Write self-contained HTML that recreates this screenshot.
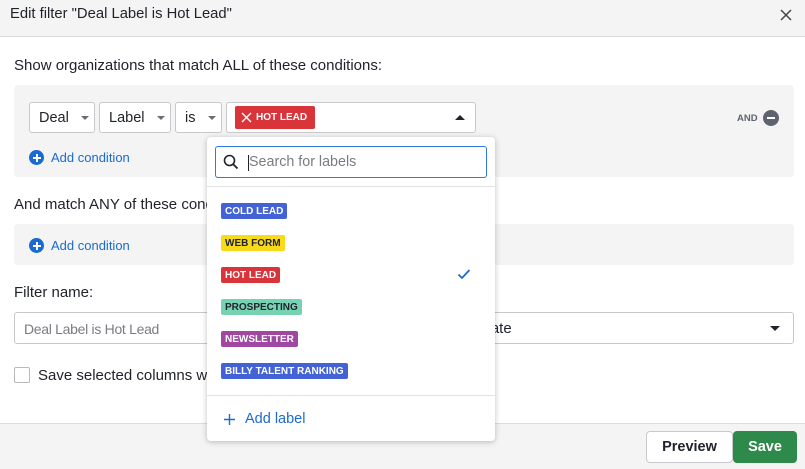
<!DOCTYPE html>
<html><head><style>
*{box-sizing:border-box;margin:0;padding:0}
body{width:805px;height:469px;overflow:hidden;background:#fff;font-family:"Liberation Sans",sans-serif;color:#21232c;position:relative;font-size:14px}
.a{position:absolute}
.hdr{left:0;top:0;width:805px;height:37px;background:#f4f4f4;border-bottom:1px solid #dcdcdc}
.box{background:#f4f4f4;border-radius:4px}
.sel{background:#fff;border:1px solid #c8c9cc;border-radius:3px;height:31px;top:102px;font-size:14.5px;line-height:31px;padding-left:9px}
.car{position:absolute;width:0;height:0;border-left:4px solid transparent;border-right:4px solid transparent;border-top:4px solid #6a6d74;top:13px}
.add{color:#1a6bd0;font-size:13px}
.plus{width:15px;height:15px;border-radius:50%;background:#1a6bd0;color:#fff}
.plus:before{content:"";position:absolute;left:3.5px;top:6.5px;width:8px;height:2px;background:#fff}
.plus:after{content:"";position:absolute;left:6.5px;top:3.5px;width:2px;height:8px;background:#fff}
.tag{left:221px;height:16px;font-size:10px;font-weight:bold;line-height:17px;padding:0 4px;border-radius:2px;color:#fff}
.btn{top:431px;height:32px;border-radius:4px;font-weight:bold;font-size:14.5px;line-height:31px;text-align:center}
.t{font-size:15px}
</style></head><body>
<div class="a hdr"></div>
<div class="a" style="left:10px;top:6px;font-size:14.8px">Edit filter "Deal Label is Hot Lead"</div>
<svg class="a" style="left:779px;top:8px" width="14" height="14"><path d="M2 2L12 12M12 2L2 12" stroke="#444" stroke-width="1.5"/></svg>

<div class="a t" style="left:14px;top:57px">Show organizations that match ALL of these conditions:</div>
<div class="a box" style="left:14px;top:85px;width:780px;height:92px"></div>
<div class="a sel" style="left:29px;width:66px">Deal<span class="car" style="left:51px"></span></div>
<div class="a sel" style="left:99px;width:72px">Label<span class="car" style="left:57px"></span></div>
<div class="a sel" style="left:175px;width:47px">is<span class="car" style="left:32px"></span></div>
<div class="a sel" style="left:226px;width:250px"><span class="car" style="left:228px;border-top:none;border-bottom:5px solid #21232c;top:12px;border-left-width:5px;border-right-width:5px"></span></div>
<div class="a" style="left:235px;top:106px;width:80px;height:23px;background:#d8343a;border-radius:2px;color:#fff;font-size:10px;font-weight:bold;line-height:24px;padding-left:21px">HOT LEAD</div>
<svg class="a" style="left:241px;top:112px" width="11" height="11"><path d="M1 1L10 10M10 1L1 10" stroke="#fff" stroke-width="1.4"/></svg>
<div class="a" style="left:737px;top:113px;font-size:9.5px;font-weight:bold;color:#5f6370">AND</div>
<div class="a" style="left:763px;top:110px;width:16px;height:16px;border-radius:50%;background:#5f6370"><div class="a" style="left:4px;top:7px;width:8px;height:2px;background:#fff"></div></div>
<div class="a plus" style="left:29px;top:150px"></div>
<div class="a add" style="left:51px;top:150px">Add condition</div>

<div class="a t" style="left:14px;top:196px">And match ANY of these conditions:</div>
<div class="a box" style="left:14px;top:224px;width:780px;height:41px"></div>
<div class="a plus" style="left:29px;top:238px"></div>
<div class="a add" style="left:51px;top:238px">Add condition</div>

<div class="a t" style="left:14px;top:284px">Filter name:</div>
<div class="a" style="left:14px;top:312px;width:390px;height:32px;border:1px solid #c8c9cc;border-radius:3px;color:#7a7c82;padding-left:9px;line-height:32px;font-size:14px;letter-spacing:-0.3px">Deal Label is Hot Lead</div>
<div class="a" style="left:412px;top:312px;width:382px;height:32px;border:1px solid #c8c9cc;border-radius:3px;padding-left:52px;line-height:31px;font-size:15px">Private<span class="car" style="left:357px;border-top-width:5px;border-left-width:5px;border-right-width:5px;border-top-color:#21232c"></span></div>
<div class="a" style="left:14px;top:367px;width:16px;height:16px;border:1px solid #b8b9bc;border-radius:2px;background:#fff"></div>
<div class="a t" style="left:38px;top:367px">Save selected columns with filter</div>

<div class="a" style="left:0;top:423px;width:805px;height:46px;background:#f4f4f4;border-top:1px solid #dcdcdc"></div>
<div class="a btn" style="left:646px;width:87px;background:#fff;border:1px solid #c8c9cc">Preview</div>
<div class="a btn" style="left:733px;width:64px;background:#2d8a4a;color:#fff;line-height:33px">Save</div>

<div class="a" style="left:207px;top:137px;width:288px;height:304px;background:#fff;border-radius:4px;box-shadow:0 1px 6px rgba(0,0,0,.25)">
 <div class="a" style="left:8px;top:9px;width:272px;height:32px;border:1px solid #3179e0;border-radius:3px"></div>
 <svg class="a" style="left:16px;top:17px" width="16" height="16"><circle cx="6.5" cy="6.5" r="5" fill="none" stroke="#21232c" stroke-width="1.6"/><path d="M10.2 10.2L14.5 14.5" stroke="#21232c" stroke-width="1.8"/></svg>
 <div class="a" style="left:41px;top:18px;width:1px;height:16px;background:#21232c"></div>
 <div class="a" style="left:42px;top:17px;color:#7a7c82;font-size:14.3px">Search for labels</div>
 <div class="a" style="left:0;top:49px;width:288px;height:1px;background:#e2e2e2"></div>
 <div class="a" style="left:0;top:258px;width:288px;height:1px;background:#e2e2e2"></div>
 <svg class="a" style="left:17px;top:277px" width="11" height="11"><path d="M5.5 0V11M0 5.5H11" stroke="#1a6bd0" stroke-width="1.4"/></svg>
 <div class="a" style="left:38px;top:274px;color:#1a6bd0;font-size:14.5px">Add label</div>
 <svg class="a" style="left:250px;top:131px" width="14" height="12"><path d="M1.5 6.5L5 10L12.5 2" fill="none" stroke="#1a6bd0" stroke-width="1.8"/></svg>
</div>
<div class="a tag" style="top:203px;background:#4262d6">COLD LEAD</div>
<div class="a tag" style="top:235px;background:#f8da1b;color:#21232c">WEB FORM</div>
<div class="a tag" style="top:267px;background:#d8343a">HOT LEAD</div>
<div class="a tag" style="top:299px;background:#76d3b2;color:#21232c">PROSPECTING</div>
<div class="a tag" style="top:331px;background:#a047a3">NEWSLETTER</div>
<div class="a tag" style="top:363px;background:#4262d6">BILLY TALENT RANKING</div>
</body></html>
